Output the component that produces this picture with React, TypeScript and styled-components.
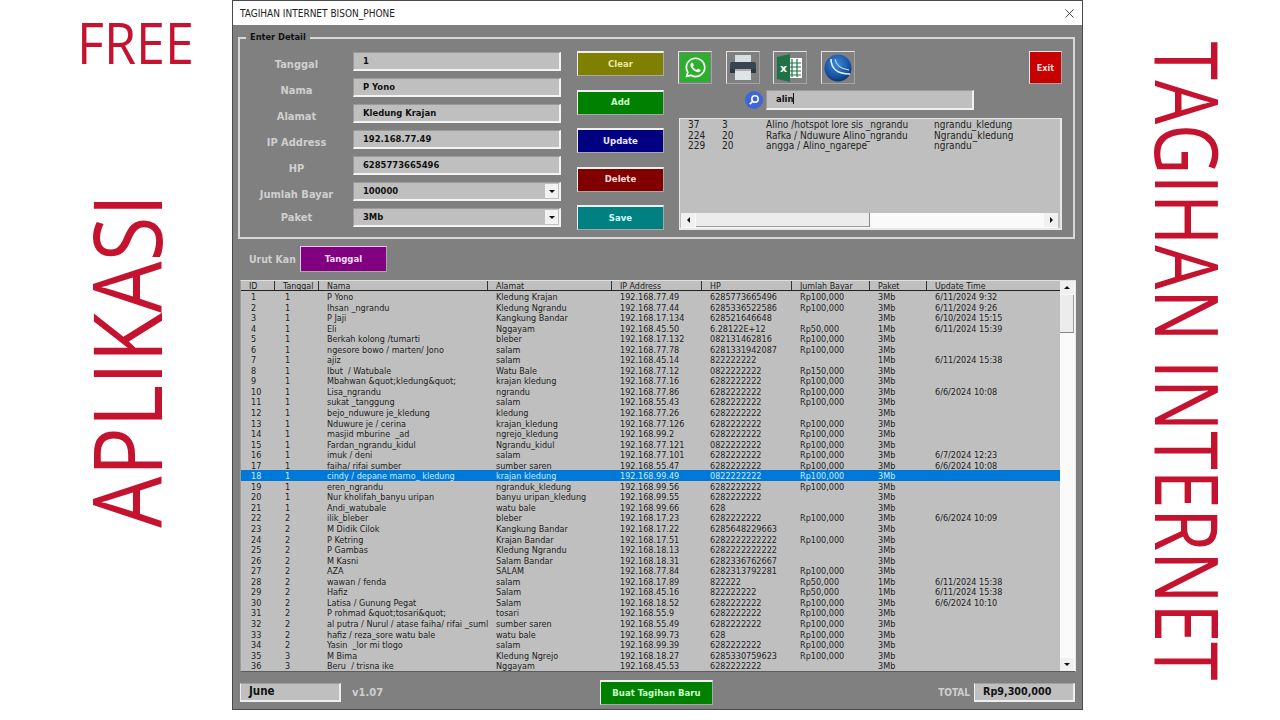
import React from "react";
import styled, { createGlobalStyle } from "styled-components";
import { FaWhatsapp } from "react-icons/fa";
import { X } from "lucide-react";

const GlobalStyle = createGlobalStyle`
  html, body { margin: 0; padding: 0; background: #fff; }
  body { width: 1280px; height: 720px; overflow: hidden; font-family: "DejaVu Sans", sans-serif; }
`;

const RED = "#c4122f";

const COLS = "34px 44px 169px 124px 90px 90px 78px 57px 132px";

type Row = [string, string, string, string, string, string, string, string, string];

const ROWS: Row[] = [
  ["1", "1", "P Yono", "Kledung Krajan", "192.168.77.49", "6285773665496", "Rp100,000", "3Mb", "6/11/2024 9:32"],
  ["2", "1", "Ihsan _ngrandu", "Kledung Ngrandu", "192.168.77.44", "6285336522586", "Rp100,000", "3Mb", "6/11/2024 9:26"],
  ["3", "1", "P Jaji", "Kangkung Bandar", "192.168.17.134", "628521646648", "", "3Mb", "6/10/2024 15:15"],
  ["4", "1", "Eli", "Nggayam", "192.168.45.50", "6.28122E+12", "Rp50,000", "1Mb", "6/11/2024 15:39"],
  ["5", "1", "Berkah kolong /tumarti", "bleber", "192.168.17.132", "082131462816", "Rp100,000", "3Mb", ""],
  ["6", "1", "ngesore bowo / marten/ Jono", "salam", "192.168.77.78", "6281331942087", "Rp100,000", "3Mb", ""],
  ["7", "1", "ajiz", "salam", "192.168.45.14", "822222222", "", "1Mb", "6/11/2024 15:38"],
  ["8", "1", "Ibut  / Watubale", "Watu Bale", "192.168.77.12", "0822222222", "Rp150,000", "3Mb", ""],
  ["9", "1", "Mbahwan &quot;kledung&quot;", "krajan kledung", "192.168.77.16", "6282222222", "Rp100,000", "3Mb", ""],
  ["10", "1", "Lisa_ngrandu", "ngrandu", "192.168.77.86", "6282222222", "Rp100,000", "3Mb", "6/6/2024 10:08"],
  ["11", "1", "sukat _tanggung", "salam", "192.168.55.43", "6282222222", "Rp100,000", "3Mb", ""],
  ["12", "1", "bejo_nduwure je_kledung", "kledung", "192.168.77.26", "6282222222", "", "3Mb", ""],
  ["13", "1", "Nduwure je / cerina", "krajan_kledung", "192.168.77.126", "6282222222", "Rp100,000", "3Mb", ""],
  ["14", "1", "masjid mburine  _ad", "ngrejo_kledung", "192.168.99.2", "6282222222", "Rp100,000", "3Mb", ""],
  ["15", "1", "Fardan_ngrandu_kidul", "Ngrandu_kidul", "192.168.77.121", "0822222222", "Rp100,000", "3Mb", ""],
  ["16", "1", "imuk / deni", "salam", "192.168.77.101", "6282222222", "Rp100,000", "3Mb", "6/7/2024 12:23"],
  ["17", "1", "faiha/ rifai sumber", "sumber saren", "192.168.55.47", "6282222222", "Rp100,000", "3Mb", "6/6/2024 10:08"],
  ["18", "1", "cindy / depane marno_ kledung", "krajan kledung", "192.168.99.49", "0822222222", "Rp100,000", "3Mb", ""],
  ["19", "1", "eren_ngrandu", "ngranduk_kledung", "192.168.99.56", "6282222222", "Rp100,000", "3Mb", ""],
  ["20", "1", "Nur kholifah_banyu uripan", "banyu uripan_kledung", "192.168.99.55", "6282222222", "", "3Mb", ""],
  ["21", "1", "Andi_watubale", "watu bale", "192.168.99.66", "628", "", "3Mb", ""],
  ["22", "2", "ilik_bleber", "bleber", "192.168.17.23", "6282222222", "Rp100,000", "3Mb", "6/6/2024 10:09"],
  ["23", "2", "M Didik Cilok", "Kangkung Bandar", "192.168.17.22", "6285648229663", "", "3Mb", ""],
  ["24", "2", "P Ketring", "Krajan Bandar", "192.168.17.51", "6282222222222", "Rp100,000", "3Mb", ""],
  ["25", "2", "P Gambas", "Kledung Ngrandu", "192.168.18.13", "6282222222222", "", "3Mb", ""],
  ["26", "2", "M Kasni", "Salam Bandar", "192.168.18.31", "6282336762667", "", "3Mb", ""],
  ["27", "2", "AZA", "SALAM", "192.168.77.84", "6282313792281", "Rp100,000", "3Mb", ""],
  ["28", "2", "wawan / fenda", "salam", "192.168.17.89", "822222", "Rp50,000", "1Mb", "6/11/2024 15:38"],
  ["29", "2", "Hafiz", "Salam", "192.168.45.16", "822222222", "Rp50,000", "1Mb", "6/11/2024 15:38"],
  ["30", "2", "Latisa / Gunung Pegat", "Salam", "192.168.18.52", "6282222222", "Rp100,000", "3Mb", "6/6/2024 10:10"],
  ["31", "2", "P rohmad &quot;tosari&quot;", "tosari", "192.168.55.9", "6282222222", "Rp100,000", "3Mb", ""],
  ["32", "2", "al putra / Nurul / atase faiha/ rifai _suml", "sumber saren", "192.168.55.49", "6282222222", "Rp100,000", "3Mb", ""],
  ["33", "2", "hafiz / reza_sore watu bale", "watu bale", "192.168.99.73", "628", "Rp100,000", "3Mb", ""],
  ["34", "2", "Yasin  _lor mi tlogo", "salam", "192.168.99.39", "6282222222", "Rp100,000", "3Mb", ""],
  ["35", "3", "M Bima", "Kledung Ngrejo", "192.168.18.27", "6285330759623", "Rp100,000", "3Mb", ""],
  ["36", "3", "Beru  / trisna ike", "Nggayam", "192.168.45.53", "6282222222", "", "3Mb", ""],
];

const HEADERS = ["ID", "Tanggal", "Nama", "Alamat", "IP Address", "HP", "Jumlah Bayar", "Paket", "Update Time"];

const FIELDS = [
  { label: "Tanggal", value: "1" },
  { label: "Nama", value: "P Yono" },
  { label: "Alamat", value: "Kledung Krajan" },
  { label: "IP Address", value: "192.168.77.49" },
  { label: "HP", value: "6285773665496" },
  { label: "Jumlah Bayar", value: "100000", combo: true },
  { label: "Paket", value: "3Mb", combo: true },
];

const ACTIONS = [
  { text: "Clear", bg: "#808000", fg: "#e6e6a8" },
  { text: "Add", bg: "#008000", fg: "#c8ffc8" },
  { text: "Update", bg: "#000080", fg: "#e8e8ff" },
  { text: "Delete", bg: "#800000", fg: "#ffdede" },
  { text: "Save", bg: "#008080", fg: "#d0ffff" },
];

const RESULTS = [
  ["37", "3", "Alino /hotspot lore sis _ngrandu", "ngrandu_kledung"],
  ["224", "20", "Rafka / Nduwure Alino_ngrandu", "Ngrandu_kledung"],
  ["229", "20", "angga / Alino_ngarepe", "ngrandu"],
];

const Page = styled.div`
  display: grid;
  grid-template-columns: 232px 851px 197px;
  width: 1280px;
  height: 720px;
`;

const LeftBanner = styled.div`
  display: flex;
  flex-direction: column;
  align-items: flex-start;
  padding: 10px 0 0 77px;
`;

const Free = styled.div`
  font: 400 56px/65px "Open Sans", sans-serif;
  color: ${RED};
  transform: scaleX(0.93);
  transform-origin: left center;
`;

const Aplikasi = styled.div`
  margin: 122px 0 0 3px;
  height: 328px;
  display: flex;
  align-items: center;
  justify-content: center;
  width: 90px;
  writing-mode: vertical-rl;
  font: 400 95px/90px "Open Sans", sans-serif;
  color: ${RED};
  white-space: nowrap;
  transform: rotate(180deg) scaleY(0.855);
`;

const RightBanner = styled.div`
  display: flex;
  justify-content: flex-start;
  padding: 42px 0 0 63px;
`;

const Tagihan = styled.div`
  height: 638px;
  width: 85px;
  display: flex;
  align-items: center;
  justify-content: center;
  writing-mode: vertical-rl;
  font: 400 88px/85px "Open Sans", sans-serif;
  color: ${RED};
  white-space: nowrap;
  transform: scaleY(0.79);
`;

const Window = styled.div`
  height: 710px;
  box-sizing: border-box;
  border: 1px solid #4a4a4a;
  background: #808080;
  display: flex;
  flex-direction: column;
`;

const TitleBar = styled.div`
  box-sizing: border-box;
  height: 24px;
  flex: none;
  background: #fff;
  display: flex;
  align-items: center;
  justify-content: space-between;
  padding: 0 5px 0 7px;
  font: 400 10px "DejaVu Sans", sans-serif;
  font-stretch: condensed;
  color: #222;
`;

const Body = styled.div`
  flex: 1;
  display: flex;
  flex-direction: column;
  padding: 12px 7px 0 5px;
`;

const Frame = styled.div`
  position: relative;
  box-sizing: border-box;
  height: 202px;
  flex: none;
  border: 2px solid #d8d8d8;
  display: grid;
  grid-template-columns: 113px 208px 87px 1fr;
  column-gap: 0;
  padding: 13px 11px 0 0;
`;

const Legend = styled.div`
  position: absolute;
  left: 6px;
  top: -8px;
  padding: 0 4px;
  background: #808080;
  font: 700 9.2px/12px "DejaVu Sans", sans-serif;
  font-stretch: condensed;
  color: #111;
`;

const FormGrid = styled.div`
  grid-column: 1 / 3;
  display: grid;
  grid-template-columns: 113px 208px;
  grid-auto-rows: 26px;
  align-items: start;
`;

const Label = styled.div<{ $raise?: boolean }>`
  text-align: center;
  font: 700 11px/26px "DejaVu Sans", sans-serif;
  font-stretch: condensed;
  color: #cfcfcf;
  margin-top: ${(p) => (p.$raise ? "-3px" : "0")};
`;

const Field = styled.div`
  position: relative;
  box-sizing: border-box;
  height: 19px;
  border-style: solid;
  border-width: 1px 2px 2px 1px;
  border-color: #9a9a9a #f4f4f4 #f4f4f4 #9a9a9a;
  background: #bfbfbf;
  padding-left: 9px;
  font: 700 9.4px/15px "DejaVu Sans", sans-serif;
  font-stretch: condensed;
  color: #111;
  display: flex;
  justify-content: space-between;
`;

const ComboArrow = styled.span`
  width: 13px;
  height: 14px;
  margin: 1px 1px 0 0;
  background: #f2f2f2;
  display: flex;
  align-items: center;
  justify-content: center;
  &::after {
    content: "";
    border-left: 3px solid transparent;
    border-right: 3px solid transparent;
    border-top: 3px solid #111;
  }
`;

const ActionColumn = styled.div`
  margin: -1px 0 0 16px;
  display: flex;
  flex-direction: column;
  width: 87px;
  gap: 13.5px;
`;

const ActionButton = styled.div<{ $bg: string; $fg: string }>`
  box-sizing: border-box;
  height: 25px;
  padding-bottom: 2px;
  border-style: solid;
  border-width: 2px 1px 1px 1px;
  border-color: #f0f0f0 #a8a8a8 #a8a8a8 #f0f0f0;
  background: ${(p) => p.$bg};
  color: ${(p) => p.$fg};
  display: flex;
  align-items: center;
  justify-content: center;
  font: 700 9.5px "DejaVu Sans", sans-serif;
  font-stretch: condensed;
`;

const RightSide = styled.div`
  margin: -1px 0 0 30px;
  display: flex;
  flex-direction: column;
  min-width: 0;
`;

const IconRow = styled.div`
  display: flex;
  height: 33px;
  gap: 13.5px;
`;

const IconButton = styled.div`
  box-sizing: border-box;
  width: 34px;
  height: 33px;
  border-style: solid;
  border-width: 1px;
  border-color: #e4e4e4 #a4a4a4 #a4a4a4 #e4e4e4;
  display: flex;
  align-items: center;
  justify-content: center;
`;

const ExitButton = styled.div`
  box-sizing: border-box;
  margin-left: auto;
  width: 33px;
  height: 33px;
  border-style: solid;
  border-width: 1px;
  border-color: #efefef #a4a4a4 #a4a4a4 #efefef;
  background: #c90000;
  color: #f4dcdc;
  display: flex;
  align-items: center;
  justify-content: center;
  font: 700 9px "DejaVu Sans", sans-serif;
  font-stretch: condensed;
`;

const WaTile = styled.div`
  width: 30px;
  height: 29px;
  background: #2eae2e;
  color: #fff;
  display: flex;
  align-items: center;
  justify-content: center;
`;

const SearchRow = styled.div`
  display: flex;
  align-items: center;
  height: 20px;
  margin-top: 6px;
  padding-left: 67px;
  gap: 3px;
`;

const SearchField = styled.div`
  box-sizing: border-box;
  width: 208px;
  height: 20px;
  border-style: solid;
  border-width: 1px 2px 2px 1px;
  border-color: #9a9a9a #f0f0f0 #f0f0f0 #9a9a9a;
  background: #bfbfbf;
  padding-left: 9px;
  font: 700 9.4px/15px "DejaVu Sans", sans-serif;
  font-stretch: condensed;
  color: #111;
`;

const Caret = styled.span`
  display: inline-block;
  width: 1px;
  height: 11px;
  vertical-align: -2px;
  background: #111;
`;

const ResultBox = styled.div`
  box-sizing: border-box;
  margin: 8px 0 0 1px;
  height: 112px;
  border-style: solid;
  border-width: 1px 2px 2px 1px;
  border-color: #e8e8e8;
  background: #bfbfbf;
  display: flex;
  flex-direction: column;
`;

const ResultList = styled.div`
  flex: 1;
  padding-top: 1px;
`;

const ResultRow = styled.div`
  display: grid;
  grid-template-columns: 34px 44px 168px 1fr;
  padding-left: 8px;
  height: 10.6px;
  font: 400 10px/10.6px "DejaVu Sans", sans-serif;
  font-stretch: condensed;
  color: #222;
  white-space: pre;
`;

const HScroll = styled.div`
  display: flex;
  height: 15px;
  flex: none;
  margin: 0 2px 0 1px;
  background: #fafafa;
`;

const ScrollBtn = styled.div<{ $dir: "left" | "right" | "up" | "down" }>`
  flex: none;
  width: 14px;
  height: 14px;
  background: #f0f0f0;
  display: flex;
  align-items: center;
  justify-content: center;
  &::after {
    content: "";
    ${(p) =>
      p.$dir === "left"
        ? "border-top: 3px solid transparent; border-bottom: 3px solid transparent; border-right: 3px solid #111;"
        : p.$dir === "right"
        ? "border-top: 3px solid transparent; border-bottom: 3px solid transparent; border-left: 3px solid #111;"
        : p.$dir === "up"
        ? "border-left: 3px solid transparent; border-right: 3px solid transparent; border-bottom: 3px solid #111;"
        : "border-left: 3px solid transparent; border-right: 3px solid transparent; border-top: 3px solid #111;"}
  }
`;

const HThumb = styled.div`
  box-sizing: border-box;
  width: 174px;
  height: 14px;
  background: #ececec;
  border-right: 1px solid #888;
  border-bottom: 1px solid #999;
  margin-left: 1px;
`;

const ScrollGap = styled.div`
  flex: 1;
`;

const SortRow = styled.div`
  display: flex;
  align-items: center;
  height: 27px;
  margin-top: 6px;
  padding-left: 11px;
  flex: none;
`;

const SortLabel = styled.div`
  width: 51px;
  font: 700 10.4px "DejaVu Sans", sans-serif;
  font-stretch: condensed;
  color: #cfcfcf;
`;

const SortButton = styled.div`
  box-sizing: border-box;
  width: 87px;
  height: 26px;
  border-style: solid;
  border-width: 1px;
  border-color: #e6c8e6 #a8a8a8 #a8a8a8 #e6c8e6;
  background: #800080;
  color: #f4dcf4;
  display: flex;
  align-items: center;
  justify-content: center;
  font: 700 9.5px "DejaVu Sans", sans-serif;
  font-stretch: condensed;
`;

const GridBox = styled.div`
  box-sizing: border-box;
  margin: 8px -1px 0 2px;
  height: 392px;
  flex: none;
  border-style: solid;
  border-width: 1px;
  border-color: #e0e0e0 #e8e8e8 #5c5c5c #9a9a9a;
  background: #bfbfbf;
  display: grid;
  grid-template-columns: 1fr 15px;
`;

const GridTable = styled.div`
  min-width: 0;
  overflow: hidden;
`;

const HeaderRow = styled.div`
  box-sizing: border-box;
  display: grid;
  grid-template-columns: ${COLS};
  height: 10px;
  border-bottom: 1px solid #222;
  font: 400 8.8px/11px "DejaVu Sans", sans-serif;
  font-stretch: condensed;
  color: #222;
`;

const HeaderCell = styled.div`
  padding-left: 8px;
  border-right: 1px solid #333;
  height: 9px;
  &:last-child { border-right: 0; }
`;

const DataRow = styled.div<{ $selected: boolean }>`
  display: grid;
  grid-template-columns: ${COLS};
  height: 10.55px;
  background: ${(p) => (p.$selected ? "#0078d7" : "transparent")};
  color: ${(p) => (p.$selected ? "#cfe8ff" : "#222")};
  font: 400 9px/12.2px "DejaVu Sans", sans-serif;
  font-stretch: condensed;
  white-space: pre;
`;

const DataCell = styled.div`
  height: 10.55px;
  padding-left: 8px;
  overflow-x: clip;
  overflow-y: visible;
  &:nth-child(-n + 2) { padding-left: 10px; }
`;

const VScroll = styled.div`
  display: flex;
  flex-direction: column;
  background: #fafafa;
`;

const VBtn = styled(ScrollBtn)`
  width: 14px;
  height: 13px;
`;

const VThumb = styled.div`
  box-sizing: border-box;
  margin-top: 1px;
  width: 14px;
  height: 38px;
  background: #ececec;
  border-bottom: 1px solid #888;
  border-right: 1px solid #999;
`;

const Footer = styled.div`
  flex: 1;
  display: flex;
  align-items: center;
  padding: 3px 0 0 2px;
`;

const FootField = styled.div<{ $w: number }>`
  box-sizing: border-box;
  width: ${(p) => p.$w}px;
  height: 19px;
  border-style: solid;
  border-width: 1px 2px 2px 1px;
  border-color: #a0a0a0 #eeeeee #eeeeee #eeeeee;
  background: #bfbfbf;
  font-family: "DejaVu Sans", sans-serif;
  font-weight: 700;
  font-stretch: condensed;
  color: #111;
`;

const MonthField = styled(FootField)`
  padding-left: 8px;
  font-size: 11.5px;
  line-height: 15px;
`;

const TotalField = styled(FootField)`
  padding-left: 8px;
  font-size: 10.7px;
  line-height: 15px;
`;

const Version = styled.div`
  margin-left: 11px;
  width: 248px;
  font: 700 10px "DejaVu Sans", sans-serif;
  color: #cfcfcf;
`;

const BillButton = styled.div`
  box-sizing: border-box;
  width: 113px;
  height: 25px;
  border-style: solid;
  border-width: 2px 1px 1px 1px;
  border-color: #f0f0f0 #a8a8a8 #a8a8a8 #f0f0f0;
  background: #008000;
  color: #c8ffc8;
  display: flex;
  align-items: center;
  justify-content: center;
  font: 700 9.5px "DejaVu Sans", sans-serif;
  font-stretch: condensed;
`;

const TotalLabel = styled.div`
  margin-left: auto;
  margin-right: 4px;
  font: 700 10px "DejaVu Sans", sans-serif;
  font-stretch: condensed;
  color: #cfcfcf;
`;

const WhatsappIcon = () => (
  <WaTile>
    <FaWhatsapp size={23} />
  </WaTile>
);

const PrinterIcon = () => (
  <svg width="28" height="27" viewBox="0 0 28 27">
    <rect x="6" y="1" width="16" height="8" fill="#d9dee0" />
    <path d="M3 8h22a2 2 0 0 1 2 2v9H1v-9a2 2 0 0 1 2-2z" fill="#37454f" />
    <rect x="1" y="15" width="26" height="4" fill="#2c3840" />
    <rect x="6" y="15" width="16" height="11" fill="#dfe4e6" />
    <rect x="6" y="15" width="16" height="2" fill="#a9b1b5" />
  </svg>
);

const ExcelIcon = () => (
  <svg width="26" height="28" viewBox="0 0 26 28">
    <rect x="10" y="4" width="15" height="20" fill="#fff" />
    <path d="M15 5v18M20 5v18M11 9h13M11 13h13M11 17h13M11 21h13" stroke="#1f7245" strokeWidth="1.2" />
    <path d="M0 3l13-3v28L0 25z" fill="#1f7245" />
    <text x="3" y="18" fontFamily="DejaVu Sans" fontWeight="700" fontSize="11" fill="#fff">x</text>
  </svg>
);

const GlobeIcon = () => (
  <svg width="28" height="28" viewBox="0 0 28 28">
    <defs>
      <radialGradient id="globeFill" cx="45%" cy="35%" r="70%">
        <stop offset="0%" stopColor="#3f86d8" />
        <stop offset="70%" stopColor="#14529f" />
        <stop offset="100%" stopColor="#0a2c5e" />
      </radialGradient>
    </defs>
    <circle cx="14" cy="14" r="13.5" fill="url(#globeFill)" />
    <path d="M7 5c0 9 6 15 19 15" fill="none" stroke="#e8f0f8" strokeWidth="1.6" />
    <path d="M11 5c1 6 6 10 14 11" fill="none" stroke="#cfe0f0" strokeWidth="1.1" />
  </svg>
);

const SearchIcon = () => (
  <svg width="18" height="18" viewBox="0 0 18 18">
    <circle cx="9" cy="9" r="9" fill="#3f66d6" />
    <circle cx="10" cy="8" r="3.2" fill="none" stroke="#fff" strokeWidth="1.5" />
    <path d="M7.6 10.4L4.8 13.2" stroke="#fff" strokeWidth="1.8" />
  </svg>
);

export default function App() {
  return (
    <Page>
      <GlobalStyle />
      <LeftBanner>
        <Free>FREE</Free>
        <Aplikasi>APLIKASI</Aplikasi>
      </LeftBanner>
      <Window>
        <TitleBar>
          <span>TAGIHAN INTERNET BISON_PHONE</span>
          <X size={15} strokeWidth={1.3} color="#222" />
        </TitleBar>
        <Body>
          <Frame>
            <Legend>Enter Detail</Legend>
            <FormGrid>
              {FIELDS.map((f) => (
                <React.Fragment key={f.label}>
                  <Label $raise={f.label === "Paket"}>{f.label}</Label>
                  <Field>
                    {f.value}
                    {f.combo && <ComboArrow />}
                  </Field>
                </React.Fragment>
              ))}
            </FormGrid>
            <ActionColumn>
              {ACTIONS.map((a) => (
                <ActionButton key={a.text} $bg={a.bg} $fg={a.fg}>
                  {a.text}
                </ActionButton>
              ))}
            </ActionColumn>
            <RightSide>
              <IconRow>
                <IconButton><WhatsappIcon /></IconButton>
                <IconButton><PrinterIcon /></IconButton>
                <IconButton><ExcelIcon /></IconButton>
                <IconButton><GlobeIcon /></IconButton>
                <ExitButton>Exit</ExitButton>
              </IconRow>
              <SearchRow>
                <SearchIcon />
                <SearchField>alin<Caret /></SearchField>
              </SearchRow>
              <ResultBox>
                <ResultList>
                  {RESULTS.map((r) => (
                    <ResultRow key={r[0]}>
                      {r.map((c, i) => (
                        <span key={i}>{c}</span>
                      ))}
                    </ResultRow>
                  ))}
                </ResultList>
                <HScroll>
                  <ScrollBtn $dir="left" />
                  <HThumb />
                  <ScrollGap />
                  <ScrollBtn $dir="right" />
                </HScroll>
              </ResultBox>
            </RightSide>
          </Frame>
          <SortRow>
            <SortLabel>Urut Kan</SortLabel>
            <SortButton>Tanggal</SortButton>
          </SortRow>
          <GridBox>
            <GridTable>
              <HeaderRow>
                {HEADERS.map((h) => (
                  <HeaderCell key={h}>{h}</HeaderCell>
                ))}
              </HeaderRow>
              {ROWS.map((r) => (
                <DataRow key={r[0]} $selected={r[0] === "18"}>
                  {r.map((c, i) => (
                    <DataCell key={i}>{c}</DataCell>
                  ))}
                </DataRow>
              ))}
            </GridTable>
            <VScroll>
              <VBtn $dir="up" />
              <VThumb />
              <ScrollGap />
              <VBtn $dir="down" />
            </VScroll>
          </GridBox>
          <Footer>
            <MonthField $w={101}>June</MonthField>
            <Version>v1.07</Version>
            <BillButton>Buat Tagihan Baru</BillButton>
            <TotalLabel>TOTAL</TotalLabel>
            <TotalField $w={101}>Rp9,300,000</TotalField>
          </Footer>
        </Body>
      </Window>
      <RightBanner>
        <Tagihan>TAGIHAN INTERNET</Tagihan>
      </RightBanner>
    </Page>
  );
}
